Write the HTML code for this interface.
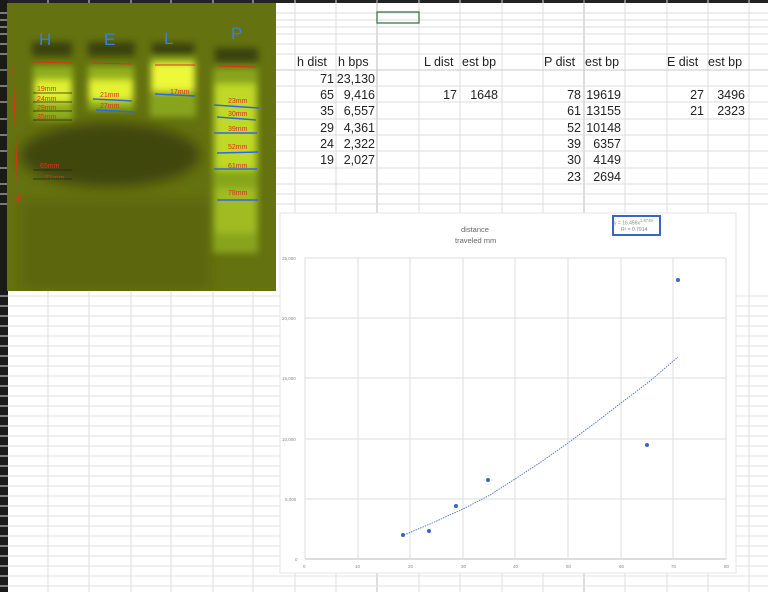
<!DOCTYPE html>
<html><head><meta charset="utf-8"><style>
body{margin:0;width:768px;height:592px;overflow:hidden;background:#fff;font-family:"Liberation Sans",sans-serif;position:relative}
.t{position:absolute;font-size:12.5px;color:#222;white-space:nowrap}
.r{text-align:right;width:40px}
.ax{position:absolute;font-size:4.5px;color:#888}
</style></head><body>
<svg width="768" height="592" style="position:absolute;left:0;top:0">
<rect x="0" y="0" width="768" height="3" fill="#222"/>
<rect x="0" y="0" width="8" height="592" fill="#1a1a1a"/>
<g stroke="#dcdcdc" stroke-width="1">
<line x1="48" y1="0" x2="48" y2="592"/><line x1="89" y1="0" x2="89" y2="592"/><line x1="131" y1="0" x2="131" y2="592"/><line x1="171" y1="0" x2="171" y2="592"/><line x1="213" y1="0" x2="213" y2="592"/><line x1="253" y1="0" x2="253" y2="592"/><line x1="295" y1="0" x2="295" y2="592"/><line x1="336" y1="0" x2="336" y2="592"/><line x1="377" y1="0" x2="377" y2="592" stroke="#bbb"/><line x1="419" y1="0" x2="419" y2="592"/><line x1="460" y1="0" x2="460" y2="592"/><line x1="502" y1="0" x2="502" y2="592"/><line x1="543" y1="0" x2="543" y2="592"/><line x1="584" y1="0" x2="584" y2="592" stroke="#bbb"/><line x1="625" y1="0" x2="625" y2="592"/><line x1="667" y1="0" x2="667" y2="592"/><line x1="708" y1="0" x2="708" y2="592"/><line x1="749" y1="0" x2="749" y2="592"/>
<line x1="0" y1="13" x2="768" y2="13"/><line x1="0" y1="20" x2="768" y2="20"/><line x1="0" y1="27" x2="768" y2="27"/><line x1="0" y1="34" x2="768" y2="34"/><line x1="0" y1="44" x2="768" y2="44"/><line x1="0" y1="54" x2="768" y2="54"/>
<line x1="0" y1="70" x2="768" y2="70" stroke="#c8c8c8"/><line x1="0" y1="86" x2="768" y2="86"/><line x1="0" y1="102" x2="768" y2="102"/><line x1="0" y1="119" x2="768" y2="119"/><line x1="0" y1="135" x2="768" y2="135"/><line x1="0" y1="151" x2="768" y2="151"/><line x1="0" y1="168" x2="768" y2="168"/><line x1="0" y1="184" x2="768" y2="184"/><line x1="0" y1="194" x2="768" y2="194"/><line x1="0" y1="204" x2="768" y2="204"/>
</g>
<g stroke="#e2e2e2">
<line x1="0" y1="296" x2="768" y2="296"/><line x1="0" y1="306" x2="768" y2="306"/><line x1="0" y1="316" x2="768" y2="316"/><line x1="0" y1="326" x2="768" y2="326"/><line x1="0" y1="336" x2="768" y2="336"/><line x1="0" y1="346" x2="768" y2="346"/><line x1="0" y1="356" x2="768" y2="356"/><line x1="0" y1="366" x2="768" y2="366"/><line x1="0" y1="376" x2="768" y2="376"/><line x1="0" y1="386" x2="768" y2="386"/><line x1="0" y1="396" x2="768" y2="396"/><line x1="0" y1="406" x2="768" y2="406"/><line x1="0" y1="416" x2="768" y2="416"/><line x1="0" y1="426" x2="768" y2="426"/><line x1="0" y1="436" x2="768" y2="436"/><line x1="0" y1="446" x2="768" y2="446"/><line x1="0" y1="456" x2="768" y2="456"/><line x1="0" y1="466" x2="768" y2="466"/><line x1="0" y1="476" x2="768" y2="476"/><line x1="0" y1="486" x2="768" y2="486"/><line x1="0" y1="496" x2="768" y2="496"/><line x1="0" y1="506" x2="768" y2="506"/><line x1="0" y1="516" x2="768" y2="516"/><line x1="0" y1="526" x2="768" y2="526"/><line x1="0" y1="536" x2="768" y2="536"/><line x1="0" y1="546" x2="768" y2="546"/><line x1="0" y1="556" x2="768" y2="556"/><line x1="0" y1="566" x2="768" y2="566"/><line x1="0" y1="576" x2="768" y2="576"/><line x1="0" y1="586" x2="768" y2="586"/>
</g>
<rect x="377" y="12" width="42" height="11" fill="none" stroke="#3a7a4a" stroke-width="1.3"/>
<defs>
<filter id="bl" x="-30%" y="-30%" width="160%" height="160%"><feGaussianBlur stdDeviation="6"/></filter>
<filter id="bl2" x="-30%" y="-30%" width="160%" height="160%"><feGaussianBlur stdDeviation="3.5"/></filter>
<clipPath id="gc"><rect x="7" y="3" width="269" height="288"/></clipPath>
</defs>
<rect x="7" y="3" width="269" height="288" fill="#64720f"/>
<g clip-path="url(#gc)">
<g filter="url(#bl)">
<ellipse cx="110" cy="155" rx="90" ry="32" fill="#40460c"/>
<rect x="20" y="200" width="190" height="90" fill="#5c6610"/>
</g>
<g filter="url(#bl2)">
<rect x="32" y="42" width="40" height="14" fill="#3a4210"/>
<rect x="88" y="42" width="47" height="14" fill="#3a4210"/>
<rect x="152" y="43" width="42" height="12" fill="#3a4210"/>
<rect x="215" y="48" width="43" height="14" fill="#3a4210"/>
<rect x="33" y="66" width="40" height="54" fill="#90ae1e"/>
<rect x="35" y="80" width="36" height="22" fill="#e0f030"/>
<rect x="88" y="66" width="46" height="44" fill="#92b01e"/>
<rect x="89" y="80" width="44" height="20" fill="#e4f230"/>
<rect x="150" y="57" width="46" height="60" fill="#88a41c"/>
<rect x="152" y="63" width="42" height="28" fill="#eef838"/>
<rect x="213" y="68" width="45" height="185" fill="#88a41c"/>
<rect x="215" y="84" width="41" height="86" fill="#c0d826"/>
<rect x="215" y="188" width="41" height="45" fill="#a0bc20"/>
</g>
</g>
<g fill="#3a80e0" font-size="17" font-family="Liberation Sans">
<text x="39" y="45">H</text><text x="104" y="45">E</text><text x="164" y="44">L</text><text x="231" y="39">P</text></g>
<g stroke="#e03020" fill="none" stroke-width="1">
<line x1="33" y1="62" x2="72" y2="63"/><line x1="92" y1="63" x2="132" y2="64"/><line x1="155" y1="65" x2="195" y2="65"/><line x1="218" y1="66" x2="256" y2="67"/>
<path d="M13 66 L18 200 M15 196 L18 202 L21 196"/>
</g>
<g fill="#e03020" font-size="7" font-family="Liberation Sans">
<text x="37" y="91">19mm</text><text x="37" y="101">24mm</text><text x="37" y="110">29mm</text><text x="37" y="119">35mm</text>
<text x="40" y="168">65mm</text><text x="45" y="180">71mm</text>
<text x="100" y="97">21mm</text><text x="100" y="108">27mm</text><text x="170" y="94">17mm</text>
<text x="228" y="103">23mm</text><text x="228" y="116">30mm</text><text x="228" y="131">39mm</text><text x="228" y="149">52mm</text><text x="228" y="168">61mm</text><text x="228" y="195">78mm</text>
</g>
<g stroke="#2a6ae0" stroke-width="1.5" fill="none">
<line x1="93" y1="99" x2="132" y2="101"/><line x1="96" y1="110" x2="135" y2="112"/><line x1="155" y1="94" x2="195" y2="96"/>
<line x1="214" y1="105" x2="259" y2="108"/><line x1="217" y1="117" x2="256" y2="120"/><line x1="214" y1="133" x2="257" y2="133"/><line x1="217" y1="153" x2="258" y2="152"/><line x1="214" y1="169" x2="257" y2="169"/><line x1="217" y1="200" x2="258" y2="200"/>
</g>
<g stroke="#222" stroke-width="0.7"><line x1="33" y1="93" x2="72" y2="93"/><line x1="33" y1="102" x2="72" y2="102"/><line x1="33" y1="111" x2="72" y2="111"/><line x1="33" y1="120" x2="72" y2="120"/><line x1="33" y1="170" x2="72" y2="170"/><line x1="33" y1="179" x2="72" y2="179"/></g>
<rect x="280" y="213" width="456" height="360" fill="#fff" stroke="#e6e6e6"/>
<g stroke="#dedede" stroke-width="1">
<line x1="305" y1="258" x2="726" y2="258"/><line x1="305" y1="318" x2="726" y2="318"/><line x1="305" y1="378" x2="726" y2="378"/><line x1="305" y1="439" x2="726" y2="439"/><line x1="305" y1="499" x2="726" y2="499"/><line x1="305" y1="559" x2="726" y2="559" stroke="#bbb"/>
<line x1="305" y1="258" x2="305" y2="559"/><line x1="358" y1="258" x2="358" y2="559"/><line x1="410" y1="258" x2="410" y2="559"/><line x1="463" y1="258" x2="463" y2="559"/><line x1="515" y1="258" x2="515" y2="559"/><line x1="568" y1="258" x2="568" y2="559"/><line x1="621" y1="258" x2="621" y2="559"/><line x1="673" y1="258" x2="673" y2="559"/><line x1="726" y1="258" x2="726" y2="559"/>
</g>
<polyline points="404,535 430,524 463,509 490,495 515,479 541,462 568,443 595,423 621,403 650,381 678,357" fill="none" stroke="#4a70c8" stroke-width="0.9" stroke-dasharray="1.5 1"/>
<g fill="#3a64c8"><circle cx="403" cy="535" r="2"/><circle cx="429" cy="531" r="2"/><circle cx="456" cy="506" r="2"/><circle cx="488" cy="480" r="2"/><circle cx="647" cy="445" r="2"/><circle cx="678" cy="280" r="2"/></g>
<rect x="613" y="216" width="47" height="19" fill="#fff" stroke="#3a64c8" stroke-width="2"/>
</svg>
<div class="ax" style="left:614px;top:218px;font-size:5px">y = 16.456x<sup>1.6749</sup></div>
<div class="ax" style="left:621px;top:227px;font-size:5px">R² = 0.7914</div>
<div class="t" style="left:461px;top:225px;font-size:7.5px;color:#666">distance</div>
<div class="t" style="left:455px;top:236px;font-size:7.5px;color:#666">traveled mm</div>
<div class="ax" style="left:282px;top:256px">25,000</div>
<div class="ax" style="left:282px;top:316px">20,000</div>
<div class="ax" style="left:282px;top:376px">15,000</div>
<div class="ax" style="left:282px;top:437px">10,000</div>
<div class="ax" style="left:285px;top:497px">5,000</div>
<div class="ax" style="left:295px;top:557px">0</div>
<div class="ax" style="left:303px;top:564px">0</div><div class="ax" style="left:355px;top:564px">10</div><div class="ax" style="left:408px;top:564px">20</div><div class="ax" style="left:461px;top:564px">30</div><div class="ax" style="left:513px;top:564px">40</div><div class="ax" style="left:566px;top:564px">50</div><div class="ax" style="left:619px;top:564px">60</div><div class="ax" style="left:671px;top:564px">70</div><div class="ax" style="left:724px;top:564px">80</div>
<div class="t" style="left:297px;top:55px">h dist</div><div class="t" style="left:338px;top:55px">h bps</div>
<div class="t" style="left:424px;top:55px">L dist</div><div class="t" style="left:462px;top:55px">est bp</div>
<div class="t" style="left:544px;top:55px">P dist</div><div class="t" style="left:585px;top:55px">est bp</div>
<div class="t" style="left:667px;top:55px">E dist</div><div class="t" style="left:708px;top:55px">est bp</div>
<div class="t r" style="left:294px;top:72px">71</div><div class="t r" style="left:335px;top:72px">23,130</div>
<div class="t r" style="left:294px;top:88px">65</div><div class="t r" style="left:335px;top:88px">9,416</div>
<div class="t r" style="left:294px;top:104px">35</div><div class="t r" style="left:335px;top:104px">6,557</div>
<div class="t r" style="left:294px;top:121px">29</div><div class="t r" style="left:335px;top:121px">4,361</div>
<div class="t r" style="left:294px;top:137px">24</div><div class="t r" style="left:335px;top:137px">2,322</div>
<div class="t r" style="left:294px;top:153px">19</div><div class="t r" style="left:335px;top:153px">2,027</div>
<div class="t r" style="left:417px;top:88px">17</div><div class="t r" style="left:458px;top:88px">1648</div>
<div class="t r" style="left:541px;top:88px">78</div><div class="t r" style="left:581px;top:88px">19619</div>
<div class="t r" style="left:541px;top:104px">61</div><div class="t r" style="left:581px;top:104px">13155</div>
<div class="t r" style="left:541px;top:121px">52</div><div class="t r" style="left:581px;top:121px">10148</div>
<div class="t r" style="left:541px;top:137px">39</div><div class="t r" style="left:581px;top:137px">6357</div>
<div class="t r" style="left:541px;top:153px">30</div><div class="t r" style="left:581px;top:153px">4149</div>
<div class="t r" style="left:541px;top:170px">23</div><div class="t r" style="left:581px;top:170px">2694</div>
<div class="t r" style="left:664px;top:88px">27</div><div class="t r" style="left:705px;top:88px">3496</div>
<div class="t r" style="left:664px;top:104px">21</div><div class="t r" style="left:705px;top:104px">2323</div>
</body></html>
